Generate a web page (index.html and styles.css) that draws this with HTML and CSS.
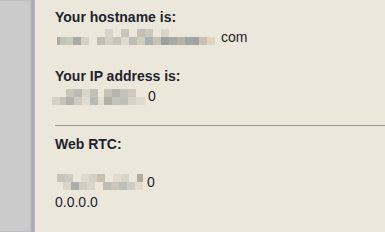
FILE: index.html
```html
<!DOCTYPE html>
<html lang="en">
<head>
  <meta charset="UTF-8">
  <title>What is my IP</title>
  <link rel="stylesheet" href="styles.css">
</head>
<body>

<div class="page">
  <div class="rail"></div>
  <div class="panel">
    <div class="field">
      <div class="label">Your hostname is:</div>
      <div class="value"><span class="mosaic host"></span>com</div>
    </div>
    <div class="field">
      <div class="label">Your IP address is:</div>
      <div class="value"><span class="mosaic ip"></span>0</div>
    </div>
    <hr class="rule">
    <div class="field rtc">
      <div class="label">Web RTC:</div>
      <div class="value spaced"><span class="mosaic local"></span>0</div>
      <div class="value">0.0.0.0</div>
    </div>
  </div>
</div>

</body>
</html>
```

FILE: styles.css
```css
:root {
  --panel-bg: #ebe7da;
  --rail-bg: #cbcbcb;
  --text: #1d2330;
  --rule: #999999;
}
html, body {
  margin: 0;
  height: 100%;
}
body {
  font-family: "Liberation Sans", Arial, sans-serif;
  font-size: 14px;
  color: var(--text);
  background: var(--panel-bg);
  overflow: hidden;
}
.page {
  display: flex;
  height: 100%;
}
.rail {
  width: 34px;
  flex: none;
  background: var(--rail-bg);
  box-shadow: inset -3px 0 2px #a7a9ae;
  border-right: 1px solid #b3b5b9;
}
.panel {
  flex: 1;
  padding: 7px 0 0 20px;
}
.field {
  margin-bottom: 19px;
}
.label {
  font-weight: bold;
  line-height: 20px;
}
.value {
  line-height: 20px;
  white-space: nowrap;
}
.value.spaced {
  margin-top: 18px;
}
.rule {
  border: 0;
  border-top: 1px solid var(--rule);
  margin: 0 0 8px 0;
}

/* pixelated (blurred out) parts of the addresses */
.mosaic {
  display: inline-block;
  vertical-align: -4px;
  height: 16px;
  background-repeat: no-repeat;
  background-size: 100% 50%;
  background-position: 0 0, 0 100%;
}
.mosaic.host {
  width: 164px;
  margin-left: 2px;
  vertical-align: -3px;
  background-image:
    linear-gradient(90deg, #ebe7da 0 48px, #d7d3c6 48px 56px, #ebe7da 56px 64px, #c9c5b8 64px 72px, #ebe7da 72px 80px, #c3c0b3 80px 88px, #cbc7ba 88px 96px, #ebe7da 96px 104px, #d9d6c8 104px 112px, #ebe7da 112px),
    linear-gradient(90deg, #a9aba6 0 3px, #c4c3ba 3px 8px, #c9c8bc 8px 16px, #a8aaa4 16px 24px, #d5d2c5 24px 32px, #ebe7da 32px 40px, #c0bdb2 40px 48px, #d2cfc2 48px 56px, #c8c4b6 56px 64px, #dedacc 64px 72px, #bdbdb6 72px 80px, #cfcdc0 80px 88px, #b0b0aa 88px 96px, #c6c2b4 96px 104px, #9da19d 104px 112px, #a9aaa3 112px 120px, #b4b2a9 120px 128px, #a3a5a1 128px 136px, #9ea19e 136px 142px, #c8c0b2 142px 150px, #e0d5c0 150px 158px, #ebe7da 158px);
}
.mosaic.ip {
  width: 96px;
  margin-left: -3px;
  background-image:
    linear-gradient(90deg, #ebe7da 0 14px, #c8c5ba 14px 22px, #bcbab1 22px 30px, #d8d4c7 30px 38px, #c2c1b8 38px 46px, #ebe7da 46px 52px, #c3c2b9 52px 60px, #b6b5ad 60px 68px, #c4c1b6 68px 76px, #d0cbbe 76px 84px, #ebe7da 84px),
    linear-gradient(90deg, #d7d2c5 0 8px, #c7c4b9 8px 14px, #b3b2aa 14px 22px, #cdcbc1 22px 30px, #dedacd 30px 38px, #b9bab2 38px 46px, #e3ddce 46px 52px, #b2b1a8 52px 60px, #c4c3ba 60px 68px, #bfc0b8 68px 76px, #d6d2c4 76px 84px, #dfdacc 84px 93px, #ebe7da 93px);
}
.mosaic.local {
  width: 90px;
  margin-left: 2px;
  vertical-align: -3px;
  background-image:
    linear-gradient(90deg, #c6c4bb 0 8px, #cdcbc1 8px 16px, #ebe7da 16px 24px, #dedacc 24px 32px, #d5d1c4 32px 40px, #c9bfae 40px 48px, #ebe7da 48px 56px, #e2dccc 56px 64px, #d9d5c8 64px 72px, #ebe7da 72px 80px, #b2aca0 80px 86px, #ebe7da 86px),
    linear-gradient(90deg, #ebe7da 0 6px, #d9d6c9 6px 14px, #acaea9 14px 22px, #cfccc1 22px 30px, #d9d6c9 30px 38px, #ebe7da 38px 46px, #bebcb3 46px 54px, #c9c6bb 54px 62px, #bdbfb9 62px 70px, #cfccc1 70px 78px, #e3dccc 78px 86px, #ebe7da 86px);
}
```
